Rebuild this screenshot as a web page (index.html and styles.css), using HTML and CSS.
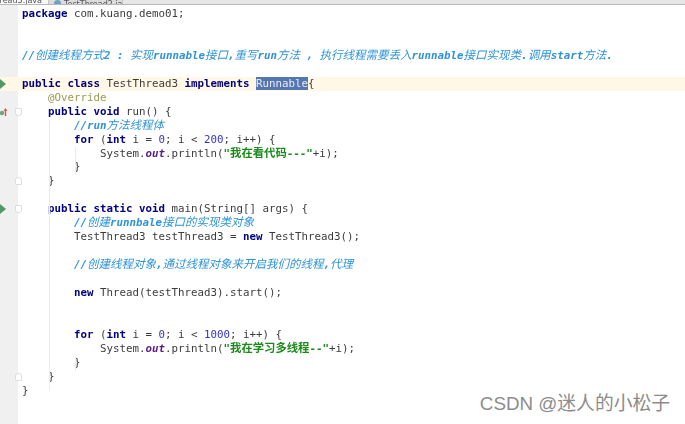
FILE: index.html
```html
<!DOCTYPE html>
<html lang="zh">
<head>
<meta charset="utf-8">
<title>TestThread3.java</title>
<link rel="stylesheet" href="styles.css">
</head>
<body>
<div class="tabs">
  <div class="tab tab-active">TestThread3.java <span class="x">×</span></div>
  <div class="tab"><span class="tab-icon"></span>TestThread2.java <span class="x">×</span></div>
</div>
<div class="editor">
  <div class="guide guide-1"></div>
  <div class="guide guide-2"></div>
  <div class="guide guide-3"></div>
  <div class="row"><div class="gut"></div><div class="code"><b class="k">package</b> com.kuang.demo01;</div></div>
  <div class="row"><div class="gut"></div><div class="code"></div></div>
  <div class="row"><div class="gut"></div><div class="code"></div></div>
  <div class="row"><div class="gut"></div><div class="code c">//<span class="zh">创建线程方式</span>2 : <span class="zh">实现</span>runnable<span class="zh">接口</span>,<span class="zh">重写</span>run<span class="zh">方法</span> , <span class="zh">执行线程需要丢入</span>runnable<span class="zh">接口实现类</span>.<span class="zh">调用</span>start<span class="zh">方法</span>.</div></div>
  <div class="row"><div class="gut"></div><div class="code"></div></div>
  <div class="row row-hl"><div class="gut"><svg class="run" viewBox="0 0 6 10"><path d="M0 0L6 5L0 10Z"/></svg></div><div class="code"><b class="k">public class</b> TestThread3 <b class="k">implements</b> <span class="sel">Runnable</span>{</div></div>
  <div class="row"><div class="gut"></div><div class="code in1 an">@Override</div></div>
  <div class="row"><div class="gut"><svg class="over" viewBox="0 0 8 10"><circle cx="2" cy="6" r="2.2" fill="#6fa67a"/><path d="M5.5 1L7.5 4H6.2V9H4.8V4H3.5Z" fill="#c8604f"/></svg><span class="fold"></span></div><div class="code in1"><b class="k">public void</b> run() {</div></div>
  <div class="row"><div class="gut"></div><div class="code in2 c">//run<span class="zh">方法线程体</span></div></div>
  <div class="row"><div class="gut"></div><div class="code in2"><b class="k">for</b> (<b class="k">int</b> i = <span class="n">0</span>; i &lt; <span class="n">200</span>; i++) {</div></div>
  <div class="row"><div class="gut"></div><div class="code in3">System.<i class="f">out</i>.println(<b class="s">"<span class="zs">我在看代码</span>---"</b>+i);</div></div>
  <div class="row"><div class="gut"></div><div class="code in2">}</div></div>
  <div class="row"><div class="gut"><span class="fold fold-up"></span></div><div class="code in1">}</div></div>
  <div class="row"><div class="gut"></div><div class="code"></div></div>
  <div class="row"><div class="gut"><svg class="run" viewBox="0 0 6 10"><path d="M0 0L6 5L0 10Z"/></svg><span class="fold"></span></div><div class="code in1"><b class="k">public static void</b> main(String[] args) {</div></div>
  <div class="row"><div class="gut"></div><div class="code in2 c">//<span class="zh">创建</span>runnbale<span class="zh">接口的实现类对象</span></div></div>
  <div class="row"><div class="gut"></div><div class="code in2">TestThread3 testThread3 = <b class="k">new</b> TestThread3();</div></div>
  <div class="row"><div class="gut"></div><div class="code"></div></div>
  <div class="row"><div class="gut"></div><div class="code in2 c">//<span class="zh">创建线程对象</span>,<span class="zh">通过线程对象来开启我们的线程</span>,<span class="zh">代理</span></div></div>
  <div class="row"><div class="gut"></div><div class="code"></div></div>
  <div class="row"><div class="gut"></div><div class="code in2"><b class="k">new</b> Thread(testThread3).start();</div></div>
  <div class="row"><div class="gut"></div><div class="code"></div></div>
  <div class="row"><div class="gut"></div><div class="code"></div></div>
  <div class="row"><div class="gut"></div><div class="code in2"><b class="k">for</b> (<b class="k">int</b> i = <span class="n">0</span>; i &lt; <span class="n">1000</span>; i++) {</div></div>
  <div class="row"><div class="gut"></div><div class="code in3">System.<i class="f">out</i>.println(<b class="s">"<span class="zs">我在学习多线程</span>--"</b>+i);</div></div>
  <div class="row"><div class="gut"></div><div class="code in2">}</div></div>
  <div class="row"><div class="gut"><span class="fold fold-up"></span></div><div class="code in1">}</div></div>
  <div class="row"><div class="gut"></div><div class="code">}</div></div>
</div>
<div class="mark">CSDN @迷人的小松子</div>
</body>
</html>
```
FILE: styles.css
```css
* { box-sizing: border-box; }
html, body { margin: 0; height: 100%; }
body {
  width: 685px;
  height: 424px;
  overflow: hidden;
  background: #fff;
  position: relative;
  display: flex;
  flex-direction: column;
}
.tabs {
  height: 5px;
  flex: none;
  display: flex;
  background: #e6e6e6;
  border-bottom: 1px solid #b8b8b8;
  overflow: hidden;
  font: 8px/5px "DejaVu Sans", sans-serif;
  color: #555;
  filter: blur(0.5px);
}
.tab { height: 4px; padding: 0 6px 0 0; white-space: nowrap; line-height: 1px; border-right: 1px solid #c4c4c4; overflow: hidden; }
.tab-active { width: 49px; background: #f8f8f8; direction: rtl; }
.tab:nth-child(2) { width: 74px; padding-left: 5px; background: #dcdcdc; }
.tab-icon { display: inline-block; width: 7px; height: 7px; border-radius: 50%; background: #6f9fc8; margin-right: 3px; }
.x { color: #888; }
.editor {
  flex: 1;
  position: relative;
  padding-top: 2px;
  background: linear-gradient(to right, #f0f0f0 18px, #fff 18px);
  font: 10.8px/13.96px "DejaVu Sans Mono", "Noto Sans CJK SC", monospace;
  color: #3c3c3c;
  filter: blur(0.55px);
}
.row { display: flex; height: 13.96px; }
.row-hl { background: #fff8e6; }
.gut { flex: none; width: 18px; position: relative; }
.code { flex: 1; padding-left: 4px; white-space: pre; }
.in1 { padding-left: 30px; }
.in2 { padding-left: 56px; }
.in3 { padding-left: 82px; }
.k { color: #000080; font-weight: bold; }
.c { color: #2f93d8; font-style: italic; font-weight: bold; }
.zh { font-size: 11.5px; font-weight: normal; }
.zs { font-size: 11.35px; }
.an { color: #9a9a50; }
.n { color: #3333cc; }
.s { color: #1b8a1b; font-weight: bold; }
.f { color: #5a1a80; font-weight: bold; font-style: italic; }
.sel { background: #5577b0; color: #e8ecf5; }
.run { position: absolute; left: 0; top: 2px; width: 6px; height: 10px; fill: #4f9a68; }
.over { position: absolute; left: 0; top: 2px; width: 8px; height: 10px; }
.fold {
  position: absolute;
  left: 15px;
  top: 3px;
  width: 7px;
  height: 8px;
  background: #fff;
  border: 1px solid #ddd;
  border-radius: 1px 1px 3px 3px;
}
.fold-up { border-radius: 3px 3px 1px 1px; }
.guide { position: absolute; width: 1px; background: #ececec; }
.guide-1 { left: 49px; top: 114px; height: 272px; }
.guide-2 { left: 75px; top: 142px; height: 28px; }
.guide-3 { left: 75px; top: 352px; height: 14px; }
.mark {
  position: absolute;
  right: 15px;
  bottom: 9px;
  font: 18.8px/22px "Liberation Sans", "Noto Sans CJK SC", sans-serif;
  color: #8c8c8c;
}
```
